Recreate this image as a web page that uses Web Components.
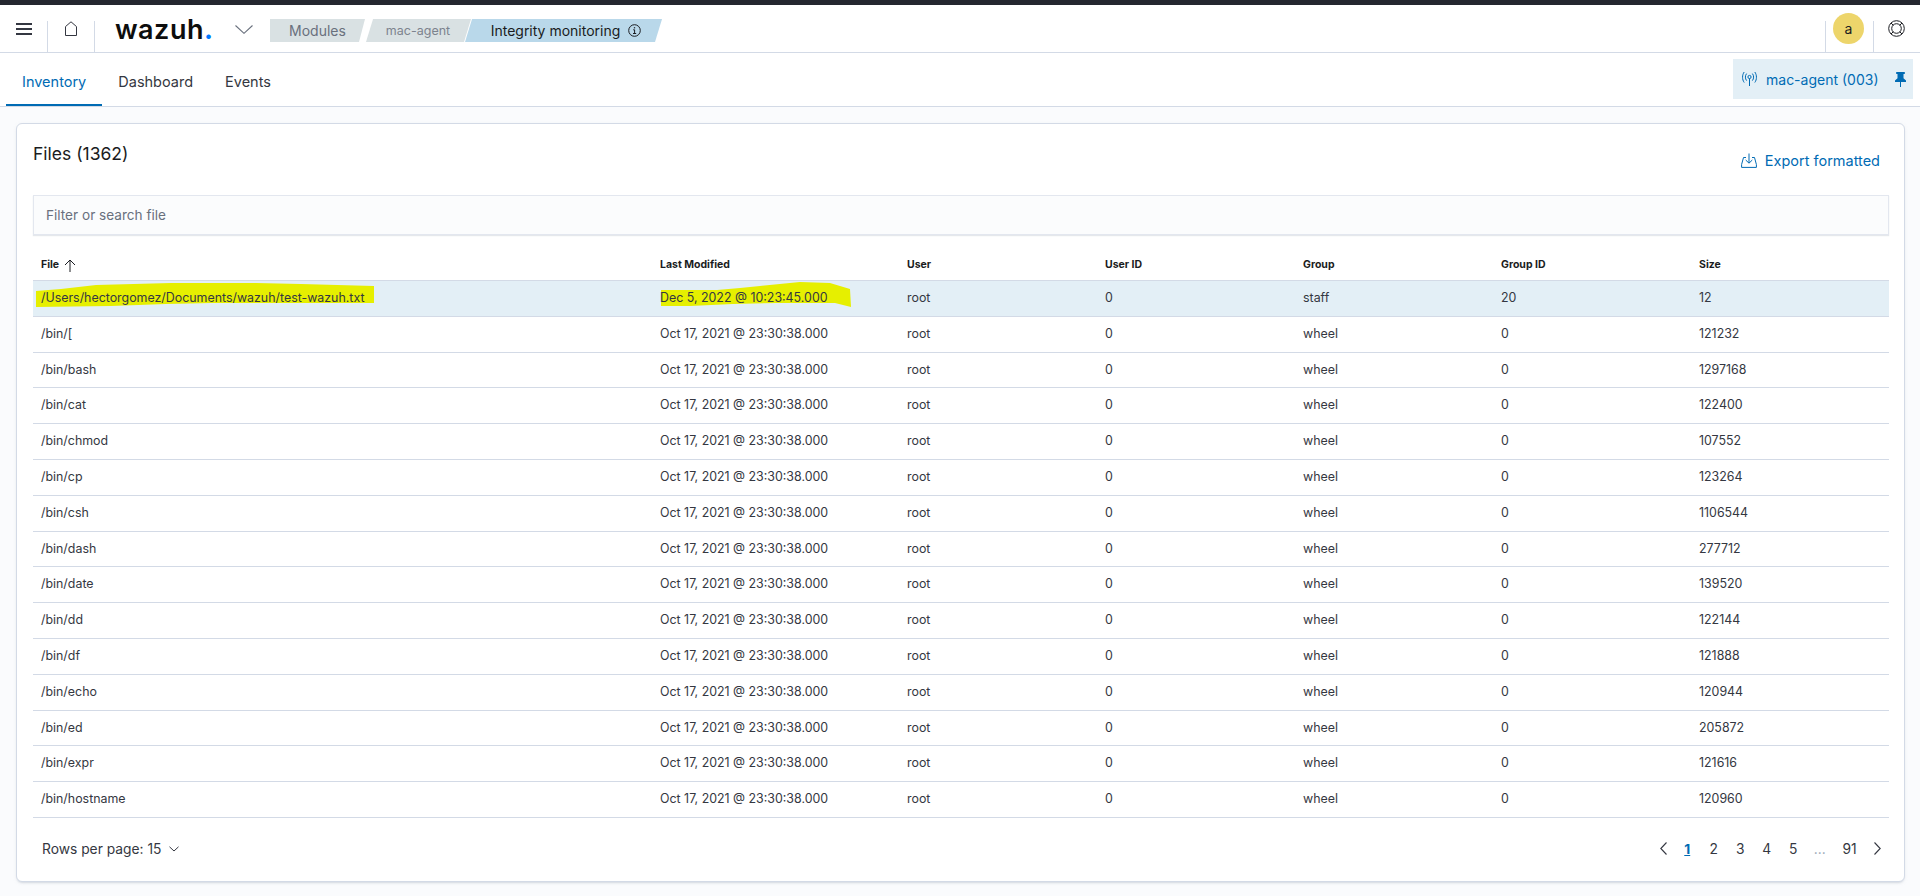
<!DOCTYPE html>
<html>
<head>
<meta charset="utf-8">
<title>Integrity monitoring</title>
<style>
	html,body{margin:0;height:100%;background:#fafbfd;}
	body{font-family:Inter,"Liberation Sans",sans-serif;color:#343741;}
</style>
</head>
<body>
<wz-header></wz-header>
<wz-tabs></wz-tabs>
<wz-files></wz-files>
<script>
class wzHeader extends HTMLElement {
	constructor(){
		super();
		this.attachShadow({mode:'open'});
	}
	connectedCallback(){
		this.shadowRoot.innerHTML = `
			<style>
				:host{display:flex;align-items:stretch;height:47px;border-top:5px solid #24272f;border-bottom:1px solid #d3dae6;background:#fff;box-sizing:content-box;}
				.cell{display:flex;align-items:center;justify-content:center;margin-top:16px;padding-bottom:16px;border-right:1px solid #d3dae6;box-sizing:border-box;}
				.menu{width:48px;}
				.home{width:47px;}
				.logo{margin:8px 0 0 20px;width:101px;height:36px;font-size:27px;line-height:34px;font-weight:600;color:#0d0d0d;letter-spacing:.5px;white-space:nowrap;}
				.logo b{font-weight:700;color:#0079ff;}
				.drop{margin:20px 0 0 19px;width:18px;height:9px;}
				.crumbs{display:flex;margin:14px 0 0 17px;height:23px;font-size:14px;line-height:22px;}
				.crumb{position:relative;display:flex;align-items:center;justify-content:center;height:23px;margin-right:1px;padding-left:6px;box-sizing:border-box;color:#69707d;}
				.crumb::before{content:"";position:absolute;inset:0;background:var(--bg);transform:skewX(-17deg);transform-origin:0 100%;}
				.crumb:first-child{padding-left:0;}
				.crumb:first-child::before{transform:none;clip-path:polygon(0 0,100% 0,calc(100% - 6px) 100%,0 100%);}
				.crumb:last-child{padding-left:12px;}
				.crumb span,.crumb svg{position:relative;}
				.crumb svg{margin-left:8px;}
				.spacer{flex:1;}
				.user{width:49px;height:31px;margin-top:16px;border-left:1px solid #d3dae6;border-right:1px solid #d3dae6;position:relative;box-sizing:border-box;}
				.avatar{position:absolute;left:7px;top:-8px;width:31px;height:31px;border-radius:50%;background:#edd56b;color:#1a1c21;font-size:14px;line-height:31px;text-align:center;}
				.help{width:45px;display:flex;justify-content:center;padding-top:15px;margin-right:1px;}
			</style>
			<div class="cell menu">
				<svg width="16" height="12" viewBox="0 0 16 12" fill="#343741"><rect y="0" width="16" height="2"/><rect y="5" width="16" height="2"/><rect y="10" width="16" height="2"/></svg>
			</div>
			<div class="cell home">
				<svg width="14" height="15" viewBox="0 0 14 15" fill="none" stroke="#343741"><path d="M1.5 14.5V5.6L7 .8l5.5 4.8v8.9z"/></svg>
			</div>
			<div class="logo">wazuh<b>.</b></div>
			<svg class="drop" viewBox="0 0 18 9" fill="none" stroke="#69707d" stroke-width="1.1"><path d="M.5.5 9 8.3 17.5.5"/></svg>
			<div class="crumbs">
				<div class="crumb" style="--bg:#d9e1e3;width:95px"><span>Modules</span></div>
				<div class="crumb" style="--bg:#d9e1e3;width:98px;color:#7d838e;font-size:12.5px"><span>mac-agent</span></div>
				<div class="crumb" style="--bg:#b9d8ea;width:190px;color:#1a1c21"><span>Integrity monitoring</span>
					<svg width="13" height="13" viewBox="0 0 13 13" fill="none" stroke="#1a1c21"><circle cx="6.5" cy="6.5" r="5.8"/><path d="M5.2 5.8h1.4v3.6M5 9.5h3.2"/><path d="M6.5 3.2v1.2" stroke-width="1.3"/></svg>
				</div>
			</div>
			<div class="spacer"></div>
			<div class="user"><div class="avatar">a</div></div>
			<div class="help">
				<svg width="17" height="17" viewBox="0 0 17 17" fill="none" stroke="#1a1c21"><circle cx="8.5" cy="8.5" r="7.8"/><circle cx="8.5" cy="8.5" r="4.8"/><path d="M3 3l2.3 2.3M14 3l-2.3 2.3M3 14l2.3-2.3M14 14l-2.3-2.3"/></svg>
			</div>
		`;
	}
}
customElements.define("wz-header", wzHeader);

class wzTabs extends HTMLElement {
	constructor(){
		super();
		this.attachShadow({mode:'open'});
	}
	connectedCallback(){
		this.shadowRoot.innerHTML = `
			<style>
				:host{display:flex;justify-content:space-between;height:53px;padding-left:6px;background:#fff;border-bottom:1px solid #d3dae6;}
				.list{display:flex;}
				.tab{padding:0 16px;height:53px;line-height:58px;font-size:14.5px;color:#343741;box-sizing:border-box;}
				.tab.on{color:#006bb4;border-bottom:2px solid #006bb4;}
				.agent{display:flex;align-items:center;width:180px;height:40px;margin:6px 7px 0 0;background:#e3eff6;color:#006bb4;font-size:14px;box-sizing:border-box;padding-left:9px;}
				.agent span{margin:0 16px 0 9px;white-space:nowrap;}
			</style>
			<div class="list">
				<div class="tab on">Inventory</div>
				<div class="tab">Dashboard</div>
				<div class="tab">Events</div>
			</div>
			<div class="agent">
				<svg width="15" height="16" viewBox="0 0 15 16" fill="none" stroke="#006bb4"><circle cx="7.5" cy="6" r="1.6"/><path d="M7.5 7.6V15"/><path d="M4.6 2.6c-1.6 2-1.6 5 0 7M10.4 2.6c1.6 2 1.6 5 0 7M2.2 1C0 4 0 8.5 2.2 11.5M12.8 1c2.2 3 2.2 7.5 0 10.5"/></svg>
				<span>mac-agent (003)</span>
				<svg width="11" height="15" viewBox="0 0 11 15" fill="#006bb4"><path d="M1.2 0h8.6v2H8.500v4.200L11 8.500v1.500H6v5H5v-5H0V8.500l2.500-2.300V2H1.200z"/></svg>
			</div>
		`;
	}
}
customElements.define("wz-tabs", wzTabs);

// yellow marker stroke drawn by hand over the screenshot, points are relative to the text
class wzMark extends HTMLElement {
	constructor(){
		super();
		this.attachShadow({mode:'open'});
	}
	connectedCallback(){
		this.shadowRoot.innerHTML = `
			<style>
				:host{display:inline-block;position:relative;}
				svg{position:absolute;left:0;top:0;width:1px;height:1px;overflow:visible;}
				span{position:relative;}
			</style>
			<svg><polygon fill="#e6ef00" points="${this.getAttribute('points')}"/></svg>
			<span><slot></slot></span>
		`;
	}
}
customElements.define("wz-mark", wzMark);

class wzRow extends HTMLElement {
	constructor(){
		super();
		this.attachShadow({mode:'open'});
	}
	connectedCallback(){
		const marked = this.hasAttribute('marked');
		const file = marked ? `<wz-mark points="-5,10 20,8 55,4 130,2 215,2 260,3 333,5 333,22 170,22 125,23 70,25 -5,26">${this.getAttribute('file')}</wz-mark>` : this.getAttribute('file');
		const date = marked ? `<wz-mark points="1,9 57,9 80,7 100,5 140,1 170,2 190,8 191,26 175,22 117,22 73,23 30,25 1,25">${this.getAttribute('date')}</wz-mark>` : this.getAttribute('date');
		this.shadowRoot.innerHTML = `
			<style>
				:host{display:grid;grid-template-columns:619px 247px repeat(5,198px);height:35.8px;box-sizing:border-box;border-bottom:1px solid #d3dae6;font-size:12.4px;line-height:34.8px;color:#343741;}
				:host([marked]){background:#e3eff6;}
				div{padding:0 8px;white-space:nowrap;}
			</style>
			<div>${file}</div>
			<div>${date}</div>
			<div>${this.getAttribute('user')}</div>
			<div>${this.getAttribute('uid')}</div>
			<div>${this.getAttribute('group')}</div>
			<div>${this.getAttribute('gid')}</div>
			<div>${this.getAttribute('size')}</div>
		`;
	}
}
customElements.define("wz-row", wzRow);

class wzPager extends HTMLElement {
	constructor(){
		super();
		this.attachShadow({mode:'open'});
	}
	connectedCallback(){
		this.shadowRoot.innerHTML = `
			<style>
				:host{display:flex;align-items:center;justify-content:space-between;height:62px;padding:0 0 0 9px;font-size:13.8px;color:#343741;}
				.rows{display:flex;align-items:center;gap:8px;}
				.pages{display:flex;align-items:center;margin-right:8px;}
				.pages span{width:26.5px;text-align:center;}
				.pages .on{color:#006bb4;font-weight:700;text-decoration:underline;}
				.pages .dots{color:#98a2b3;}
				.pages svg:first-child{margin-right:7px;}
				.pages svg:last-child{margin-left:8px;}
				.pages .big{width:33px;}
			</style>
			<div class="rows">
				<span>Rows per page: 15</span>
				<svg width="10" height="6" viewBox="0 0 10 6" fill="none" stroke="#343741"><path d="M.5.8 5 5l4.5-4.2"/></svg>
			</div>
			<div class="pages">
				<svg width="7" height="13" viewBox="0 0 7 13" fill="none" stroke="#343741" stroke-width="1.1"><path d="M6.5.5.8 6.5l5.7 6"/></svg>
				<span class="on">1</span><span>2</span><span>3</span><span>4</span><span>5</span><span class="dots">...</span><span class="big">91</span>
				<svg width="7" height="13" viewBox="0 0 7 13" fill="none" stroke="#343741" stroke-width="1.1"><path d="M.5.5l5.7 6-5.7 6"/></svg>
			</div>
		`;
	}
}
customElements.define("wz-pager", wzPager);

class wzFiles extends HTMLElement {
	constructor(){
		super();
		this.attachShadow({mode:'open'});
	}
	getRows(){
		const rows = [
			['[','121232'],['bash','1297168'],['cat','122400'],['chmod','107552'],['cp','123264'],
			['csh','1106544'],['dash','277712'],['date','139520'],['dd','122144'],['df','121888'],
			['echo','120944'],['ed','205872'],['expr','121616'],['hostname','120960']
		];
		let html = `<wz-row marked file="/Users/hectorgomez/Documents/wazuh/test-wazuh.txt" date="Dec 5, 2022 @ 10:23:45.000" user="root" uid="0" group="staff" gid="20" size="12"></wz-row>`;
		rows.forEach(r => {
			html += `<wz-row file="/bin/${r[0]}" date="Oct 17, 2021 @ 23:30:38.000" user="root" uid="0" group="wheel" gid="0" size="${r[1]}"></wz-row>`;
		});
		return html;
	}
	connectedCallback(){
		this.shadowRoot.innerHTML = `
			<style>
				:host{display:block;padding:16px 15px 0 16px;}
				.card{background:#fff;border:1px solid #d3dae6;border-radius:6px;box-shadow:0 2px 2px -1px rgba(152,162,179,.3),0 1px 5px -2px rgba(152,162,179,.3);padding:0 15px 0 16px;height:759px;box-sizing:border-box;}
				.top{display:flex;justify-content:space-between;height:71px;}
				h2{margin:18px 0 0;font-size:17.5px;font-weight:400;line-height:24px;color:#1a1c21;}
				.export{display:flex;align-items:center;gap:8px;margin:26px 9px 0 0;height:20px;font-size:14.5px;color:#006bb4;}
				.search{height:40px;background:#fbfcfd;border:1px solid #e3e7ef;box-shadow:0 1px 1px rgba(152,162,179,.25);box-sizing:border-box;padding:0 12px;line-height:38px;font-size:13.6px;color:#69707d;}
				.head{display:grid;grid-template-columns:619px 247px repeat(5,198px);height:46px;padding-top:15px;box-sizing:border-box;border-bottom:1px solid #d3dae6;font-size:10.5px;font-weight:700;color:#1a1c21;line-height:16px;}
				.head div{padding:0 8px;display:flex;align-items:center;gap:5px;}
			</style>
			<div class="card">
				<div class="top">
					<h2>Files (1362)</h2>
					<div class="export">
						<svg width="16" height="15" viewBox="0 0 16 15" fill="none" stroke="#006bb4"><path d="M8 .5v9.5M4.7 7 8 10.200 11.300 7"/><path d="M5 4.500H2.500L.6 11.500v2.900h14.800v-2.900L13.500 4.500H11"/></svg>
						<span>Export formatted</span>
					</div>
				</div>
				<div class="search">Filter or search file</div>
				<div class="head">
					<div>File <svg width="12" height="13" viewBox="0 0 12 13" fill="none" stroke="#1a1c21"><path d="M6 1v12M1 6l5-5 5 5"/></svg></div>
					<div>Last Modified</div><div>User</div><div>User ID</div><div>Group</div><div>Group ID</div><div>Size</div>
				</div>
				${this.getRows()}
				<wz-pager></wz-pager>
			</div>
		`;
	}
}
customElements.define("wz-files", wzFiles);
</script>
</body>
</html>
